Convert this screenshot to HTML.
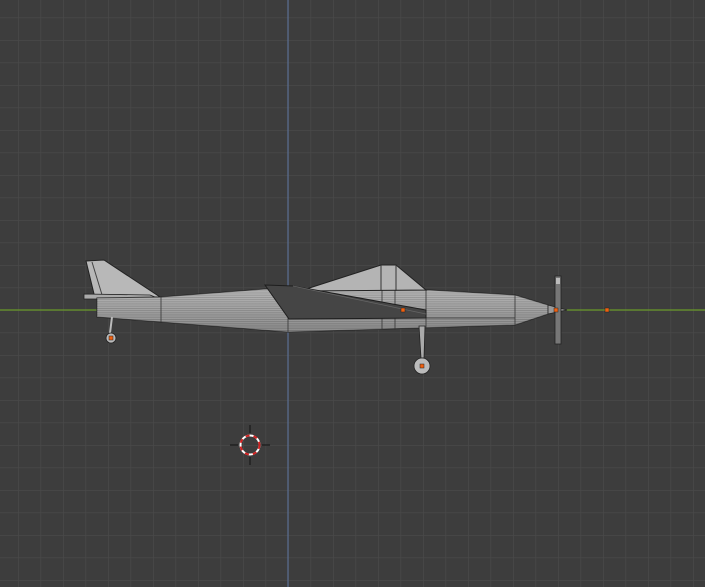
<!DOCTYPE html>
<html><head><style>html,body{margin:0;padding:0;background:#3d3d3d;overflow:hidden}svg{display:block}</style></head>
<body>
<svg width="705" height="587" viewBox="0 0 705 587" xmlns="http://www.w3.org/2000/svg">
<defs>
<pattern id="g" x="288" y="310" width="22.5" height="22.5" patternUnits="userSpaceOnUse">
<path d="M0 0H22.5M0 0V22.5" stroke="#4a4a4a" stroke-width="1.3" fill="none"/>
</pattern>
<pattern id="h" x="0" y="0" width="4" height="2.2" patternUnits="userSpaceOnUse">
<rect width="4" height="2.2" fill="#a8a8a8"/><rect width="4" height="0.7" fill="#6a6a6a"/>
</pattern>
<linearGradient id="fg" x1="0" y1="0" x2="0" y2="1">
<stop offset="0" stop-color="#c4c4c4"/><stop offset="0.5" stop-color="#9a9a9a"/><stop offset="1" stop-color="#707070"/>
</linearGradient>
</defs>
<rect width="705" height="587" fill="#3d3d3d"/>
<rect width="705" height="587" fill="url(#g)"/>
<line x1="288" y1="0" x2="288" y2="587" stroke="#5b6f92" stroke-width="1.2"/>
<line x1="0" y1="310" x2="705" y2="310" stroke="#6a9a2a" stroke-width="1.3"/>
<polygon points="86,261 104,260 160,297 95,298" fill="#b8b8b8" stroke="#222" stroke-width="1"/>
<line x1="92" y1="262" x2="103" y2="298" stroke="#444" stroke-width="1"/>
<polygon points="84,294 150,295 160,299 84,299" fill="#aaa" stroke="#222" stroke-width="0.8"/>
<path d="M97,298 L161,297 L265,289 L430,290 L515,295 L548,305 L548,314 L515,325 L288,332 L161,322 L97,317 Z" fill="url(#fg)" stroke="#222" stroke-width="1"/>
<path d="M97,298 L161,297 L265,289 L430,290 L515,295 L548,305 L548,314 L515,325 L288,332 L161,322 L97,317 Z" fill="url(#h)" opacity="0.5"/>
<g stroke="#333" stroke-width="0.8">
<line x1="161" y1="297" x2="161" y2="322"/><line x1="288" y1="289" x2="288" y2="332"/>
<line x1="382" y1="266" x2="382" y2="330"/><line x1="395" y1="266" x2="395" y2="330"/>
<line x1="426" y1="290" x2="426" y2="328"/><line x1="515" y1="295" x2="515" y2="325"/>
<line x1="290" y1="318" x2="515" y2="318"/>
</g>
<polygon points="300,291 381,265 396,265 426,290" fill="#b4b4b4" stroke="#222" stroke-width="1"/>
<line x1="381" y1="265" x2="381" y2="291" stroke="#333"/>
<line x1="396" y1="265" x2="396" y2="291" stroke="#333"/>
<polygon points="265,285 293,286 426,310 426,318 289,319" fill="#454545" stroke="#1e1e1e" stroke-width="1"/>
<line x1="293" y1="286" x2="426" y2="314" stroke="#666" stroke-width="0.8"/>
<polygon points="548,305 567,310 548,314" fill="#9a9a9a" stroke="#222" stroke-width="0.8"/>
<rect x="555" y="276" width="6" height="68" fill="#777" stroke="#222" stroke-width="0.8"/>
<rect x="556" y="278" width="4" height="6" fill="#bbb"/>
<polygon points="419,326 425,326 424,358 421,358" fill="#aaa" stroke="#222" stroke-width="0.8"/>
<circle cx="422" cy="366" r="8" fill="#bbb" stroke="#222" stroke-width="0.8"/>
<line x1="112" y1="317" x2="110" y2="333" stroke="#bbb" stroke-width="2"/>
<circle cx="111" cy="338" r="5" fill="#bbb" stroke="#222" stroke-width="0.8"/>
<g fill="#f06010" stroke="#222" stroke-width="0.5">
<rect x="401" y="308" width="4" height="4"/><rect x="554" y="308" width="4" height="4"/>
<rect x="605" y="308" width="4" height="4"/><rect x="109" y="336" width="4" height="4"/>
<rect x="420" y="364" width="4" height="4"/>
</g>
<g>
<circle cx="250" cy="445" r="9.5" fill="none" stroke="#fff" stroke-width="2"/>
<circle cx="250" cy="445" r="9.5" fill="none" stroke="#d02020" stroke-width="2" stroke-dasharray="4 4"/>
<g stroke="#111" stroke-width="1">
<line x1="250" y1="425" x2="250" y2="433"/><line x1="250" y1="457" x2="250" y2="465"/>
<line x1="230" y1="445" x2="238" y2="445"/><line x1="262" y1="445" x2="270" y2="445"/>
</g>
</g>
</svg>
</body></html>
